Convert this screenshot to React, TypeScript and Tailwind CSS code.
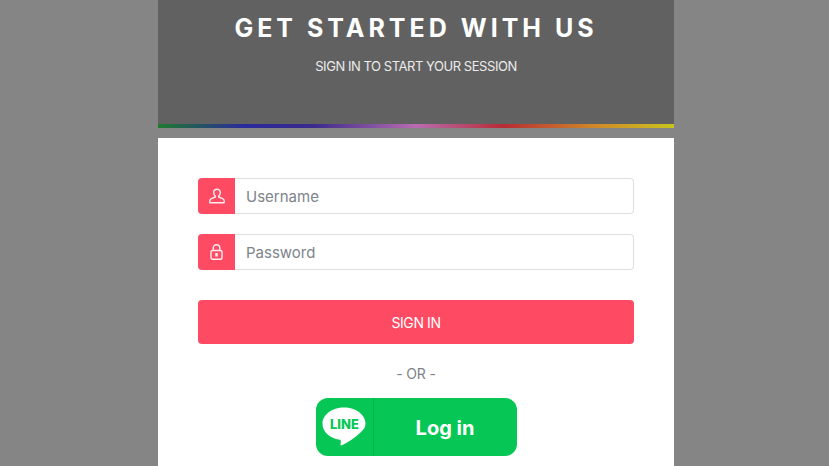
function LineLogo() {
  return (
    <svg width="44" height="40" viewBox="0 0 44 40">
      <path
        d="M22 0.500C9.900 0.500 0.500 7.700 0.500 16.800c0 8.100 7.300 14.600 17.200 16 .9.200 1.300.900 1.100 1.900l-.3 2.700c-.1.900.5 1.300 1.400.900 5.300-2.500 13.300-7.600 18.300-12.500C41.600 22.900 43.500 20.100 43.500 16.800 43.500 7.700 34.100 0.500 22 0.500z"
        fill="#fff"
      />
      <text
        x="22.500"
        y="21.500"
        textAnchor="middle"
        fill="#06c755"
        fontSize="13"
        fontWeight="800"
        fontFamily="Inter, sans-serif"
      >
        LINE
      </text>
    </svg>
  )
}

function UserIcon() {
  return (
    <svg width="16" height="16" viewBox="0 0 16 16" fill="none" stroke="currentColor" strokeWidth="1.400" strokeLinejoin="round" className="opacity-90">
      <path d="M8 1.200c-2 0-3.300 1.400-3.300 3.300 0 1.500.6 2.800 1.600 3.500v1L2.400 10.700C1.300 11.200.8 12 .8 13v1.800h14.400V13c0-1-.5-1.800-1.600-2.300L9.700 9V8c1-.7 1.600-2 1.600-3.500 0-1.900-1.300-3.300-3.300-3.300z" />
    </svg>
  )
}

function LockIcon() {
  return (
    <svg width="13" height="16" viewBox="0 0 13 16" fill="none" stroke="currentColor" strokeWidth="1.400" className="opacity-90">
      <rect x="1" y="6.500" width="11" height="8.800" rx="1.500" />
      <path d="M3.200 6.500V4a3.300 3.300 0 0 1 6.600 0v2.500" />
      <path d="M6.500 9v3.500" strokeWidth="2.600" />
    </svg>
  )
}

function Field({ placeholder, icon }: { placeholder: string; icon: React.ReactNode }) {
  return (
    <div className="flex h-[36px]">
      <div className="w-[37px] shrink-0 flex items-center justify-center rounded-l-[4px] bg-[#ff4a63] text-white">
        {icon}
      </div>
      <div className="flex-1 flex items-center pl-[11px] pt-[2px] bg-white border border-[#dcdfe2] border-l-0 rounded-r-[4px] text-[15px] text-[#7d8389]">
        {placeholder}
      </div>
    </div>
  )
}

export default function App() {
  return (
    <div className="h-[466px] overflow-hidden bg-[#858585] flex justify-center pl-[3px] font-['Inter',sans-serif]">
      <div className="w-[516px] flex flex-col">
        <div className="h-[124px] bg-[#616161] flex flex-col items-center pt-[12px] text-white">
          <h1 className="text-[25px] leading-[32px] font-bold tracking-[4px]">GET STARTED WITH US</h1>
          <p className="mt-[12px] text-[13px] leading-[20px] tracking-[-0.45px] text-[#ececec]">SIGN IN TO START YOUR SESSION</p>
        </div>
        <div className="h-[4px] bg-[linear-gradient(to_right,#1f7a2e,#2a2a9c_17%,#3a2a8c_30%,#b86cb0_50%,#b82c34_67%,#d08a28_85%,#c9c41e)]" />
        <div className="h-[10px]" />
        <div className="flex-1 bg-white px-[40px] pt-[40px]">
          <div className="flex flex-col gap-[20px]">
            <Field placeholder="Username" icon={<UserIcon />} />
            <Field placeholder="Password" icon={<LockIcon />} />
          </div>
          <div className="mt-[30px] h-[44px] rounded-[4px] bg-[#ff4a63] text-white text-[14px] tracking-[-0.4px] flex items-center justify-center">
            SIGN IN
          </div>
          <div className="mt-[20px] text-center text-[14px] leading-[20px] tracking-[-0.2px] text-[#7d8389]">- OR -</div>
          <div className="mt-[14px] mx-auto w-[201px] h-[58px] rounded-[12px] bg-[#06c755] flex items-center text-white">
            <div className="w-[58px] h-full shrink-0 flex items-center justify-center border-r border-[#05b34c]">
              <LineLogo />
            </div>
            <div className="flex-1 text-center text-[20px] font-bold pt-[2px]">Log in</div>
          </div>
        </div>
      </div>
    </div>
  )
}
